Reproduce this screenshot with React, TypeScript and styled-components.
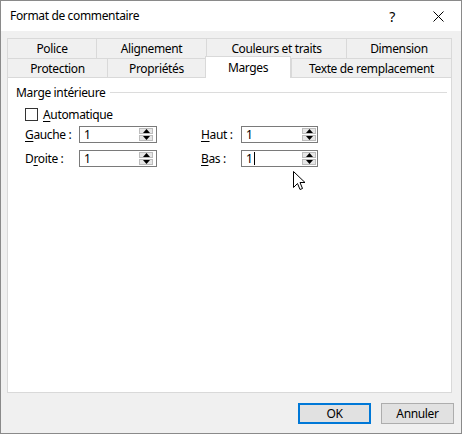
import React from "react";
import styled, { createGlobalStyle } from "styled-components";

const Global = createGlobalStyle`
  html, body { margin: 0; padding: 0; background: #ffffff; }
  body { font-family: "Noto Sans", "Open Sans", sans-serif; font-size: 12px; color: #000; letter-spacing: -0.35px; }
  * { box-sizing: border-box; }
`;

const Window = styled.div`
  position: relative;
  width: 462px;
  height: 434px;
  border: 1px solid #8a8a8a;
  display: flex;
  flex-direction: column;
  background: #f0f0f0;
  overflow: hidden;
`;

const TitleBar = styled.div`
  height: 30px;
  background: #ffffff;
  display: flex;
  align-items: center;
  padding-left: 9px;
  flex-shrink: 0;
`;

const Title = styled.div`
  flex: 1;
  font-size: 12px;
  line-height: 16px;
`;

const TitleButton = styled.div<{ $w: number }>`
  width: ${(p) => p.$w}px;
  height: 30px;
  display: flex;
  align-items: center;
  justify-content: center;
  font-size: 14px;
`;

const Body = styled.div`
  flex: 1;
  display: flex;
  flex-direction: column;
  padding: 7px 0 0 6px;
`;

const Tabs = styled.div`
  width: 445px;
  display: flex;
  flex-direction: column;
`;

const TabRow = styled.div`
  display: flex;
  height: ${(p: { $h: number }) => p.$h}px;
  align-items: flex-end;
`;

const Tab = styled.div<{ $w: number; $sel?: boolean; $last?: boolean; $h: number }>`
  width: ${(p) => p.$w}px;
  height: ${(p) => (p.$sel ? p.$h + 3 : p.$h)}px;
  margin-bottom: ${(p) => (p.$sel ? -1 : 0)}px;
  border-top: 1px solid #d9d9d9;
  border-left: 1px solid #d9d9d9;
  border-right: ${(p) => (p.$last || p.$sel ? "1px solid #d9d9d9" : "none")};
  background: ${(p) => (p.$sel ? "#ffffff" : "#f0f0f0")};
  position: relative;
  z-index: ${(p) => (p.$sel ? 2 : 1)};
  display: flex;
  align-items: center;
  justify-content: center;
  font-size: 12px;
  line-height: 16px;
  padding-top: ${(p) => (p.$sel ? 0 : 1)}px;
`;

const Panel = styled.div`
  width: 445px;
  height: 316px;
  background: #ffffff;
  border: 1px solid #d9d9d9;
  position: relative;
  z-index: 1;
  padding: 6px 4px 0 8px;
  display: flex;
  flex-direction: column;
`;

const GroupHeader = styled.div`
  display: flex;
  align-items: center;
  height: 16px;
  gap: 5px;
`;

const GroupLine = styled.div`
  flex: 1;
  height: 1px;
  background: #dcdcdc;
`;

const GroupBody = styled.div`
  padding: 6px 0 0 9px;
  display: flex;
  flex-direction: column;
`;

const CheckRow = styled.label`
  display: flex;
  align-items: center;
  height: 16px;
  gap: 5px;
  margin-bottom: 4px;
`;

const CheckBox = styled.span`
  width: 13px;
  height: 13px;
  border: 1px solid #333333;
  background: #fff;
  display: inline-block;
`;

const U = styled.span`
  text-decoration: underline;
  text-underline-offset: 2px;
`;

const FieldGrid = styled.div`
  display: grid;
  grid-template-columns: 54px 78px 44px 40px 77px;
  row-gap: 7px;
  align-items: center;
`;

const Label = styled.div`
  line-height: 16px;
`;

const Spin = styled.div`
  height: 17px;
  border: 1px solid #7a7a7a;
  background: #fff;
  display: flex;
  align-items: stretch;
  padding: 1px 1px 1px 4px;
  position: relative;
`;

const SpinText = styled.div`
  flex: 1;
  font-size: 12px;
  line-height: 13px;
  display: flex;
  align-items: center;
`;

const Caret = styled.span`
  display: inline-block;
  width: 1px;
  height: 13px;
  background: #000;
  margin-left: 1px;
`;

const SpinButtons = styled.div`
  width: 14px;
  display: flex;
  flex-direction: column;
  gap: 1px;
  margin-right: ${(p: { $mr: number }) => p.$mr}px;
`;

const SpinBtn = styled.div`
  flex: 1;
  background: #e6e6e6;
  border: 1px solid #bcbcbc;
  display: flex;
  align-items: center;
  justify-content: center;
`;

const Footer = styled.div`
  display: flex;
  justify-content: flex-end;
  gap: 10px;
  padding: 10px 7px 0 0;
`;

const Button = styled.div<{ $def?: boolean }>`
  width: 73px;
  height: 21px;
  background: #e1e1e1;
  border: ${(p) => (p.$def ? "2px solid #0078d7" : "1px solid #adadad")};
  display: flex;
  align-items: center;
  justify-content: center;
  font-size: 12px;
`;

const Cursor = styled.svg`
  position: absolute;
  left: 292px;
  top: 170px;
  z-index: 10;
`;

const Up = () => (
  <svg width="7" height="4" viewBox="0 0 7 4">
    <path d="M3.5 0 L7 4 L0 4 Z" fill="#000" />
  </svg>
);
const Down = () => (
  <svg width="7" height="4" viewBox="0 0 7 4">
    <path d="M0 0 L7 0 L3.5 4 Z" fill="#000" />
  </svg>
);

const Spinner: React.FC<{ value: string; caret?: boolean; mr?: number }> = ({ value, caret, mr = 0 }) => (
  <Spin>
    <SpinText>
      {value}
      {caret && <Caret />}
    </SpinText>
    <SpinButtons $mr={mr}>
      <SpinBtn>
        <Up />
      </SpinBtn>
      <SpinBtn>
        <Down />
      </SpinBtn>
    </SpinButtons>
  </Spin>
);

export default function App() {
  return (
    <>
      <Global />
      <Window>
        <TitleBar>
          <Title>Format de commentaire</Title>
          <TitleButton $w={46}>?</TitleButton>
          <TitleButton $w={46}>
            <svg width="11" height="11" viewBox="0 0 11 11">
              <path d="M0.5 0.5 L10.5 10.5 M10.5 0.5 L0.5 10.5" stroke="#000" strokeWidth="1" />
            </svg>
          </TitleButton>
        </TitleBar>
        <Body>
          <Tabs>
            <TabRow $h={20}>
              <Tab $h={20} $w={89}>Police</Tab>
              <Tab $h={20} $w={110}>Alignement</Tab>
              <Tab $h={20} $w={140}>Couleurs et traits</Tab>
              <Tab $h={20} $w={106} $last>Dimension</Tab>
            </TabRow>
            <TabRow $h={19}>
              <Tab $h={19} $w={100}>Protection</Tab>
              <Tab $h={19} $w={98}>Propriétés</Tab>
              <Tab $h={19} $w={86} $sel>Marges</Tab>
              <Tab $h={19} $w={161} $last>Texte de remplacement</Tab>
            </TabRow>
          </Tabs>
          <Panel>
            <GroupHeader>
              <span>Marge intérieure</span>
              <GroupLine />
            </GroupHeader>
            <GroupBody>
              <CheckRow>
                <CheckBox />
                <span>
                  <U>A</U>utomatique
                </span>
              </CheckRow>
              <FieldGrid>
                <Label>
                  <U>G</U>auche :
                </Label>
                <Spinner value="1" mr={2} />
                <span />
                <Label>
                  <U>H</U>aut :
                </Label>
                <Spinner value="1" />
                <Label>
                  D<U>r</U>oite :
                </Label>
                <Spinner value="1" mr={2} />
                <span />
                <Label>
                  <U>B</U>as :
                </Label>
                <Spinner value="1" caret />
              </FieldGrid>
            </GroupBody>
          </Panel>
          <Footer>
            <Button $def>OK</Button>
            <Button>Annuler</Button>
          </Footer>
        </Body>
        <Cursor width="13" height="20" viewBox="0 0 13 20">
          <path
            d="M0.5 0.5 L0.5 16.5 L4.5 12.5 L7 18.5 L9.5 17.5 L7 11.5 L12 11.5 Z"
            fill="#fff"
            stroke="#000"
            strokeWidth="1"
            strokeLinejoin="miter"
          />
        </Cursor>
      </Window>
    </>
  );
}
